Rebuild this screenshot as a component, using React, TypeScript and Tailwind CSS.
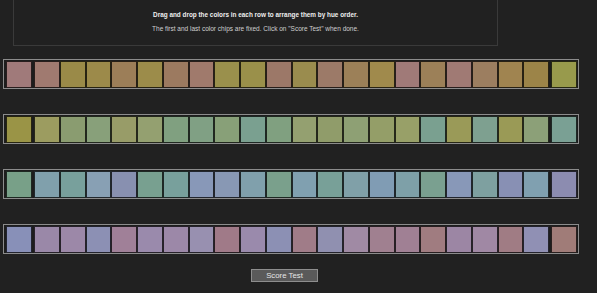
const rows: string[][] = [
  ['#a07a7a', '#a07a70', '#9a8a48', '#9c8a4a', '#9c7e58', '#9c8c4a', '#9c7a60', '#a07a6c', '#9a904c', '#9a904a', '#9c7868', '#9a8c4e', '#9c7a68', '#9c8058', '#a08a4c', '#a07a78', '#9c8058', '#a07a74', '#9c7e60', '#a08450', '#9c8448', '#989a4c'],
  ['#9a9446', '#9c9c60', '#8a9c70', '#88a07a', '#989c68', '#94a070', '#80a080', '#80a084', '#88a078', '#7aa090', '#80a080', '#94a070', '#909c6a', '#8ea074', '#949e68', '#98a068', '#7aa090', '#9a9a58', '#7ea090', '#9a9a56', '#8ca078', '#7aa094'],
  ['#78a088', '#80a0ac', '#78a09c', '#88a0b4', '#8890b0', '#78a090', '#78a09c', '#8898b8', '#8898b4', '#80a0ac', '#7aa08c', '#80a0b0', '#78a098', '#80a0a8', '#809cb4', '#7ea0a8', '#7aa090', '#8898b8', '#7ea0a0', '#8890b4', '#80a0b0', '#8c8cb0'],
  ['#8890b8', '#9a88a8', '#9c88a8', '#8c90b4', '#a08098', '#9a8aac', '#9c88a8', '#9890b0', '#a07a88', '#9a8aac', '#8c90b4', '#a07c88', '#9090b0', '#a08aa4', '#a08090', '#a08094', '#a07c80', '#9c86a4', '#a088a4', '#a07c84', '#9090b4', '#a07c78'],
];

function Chip({ color, fixed }: { color: string; fixed?: boolean }) {
  return (
    <div
      className={(fixed ? 'w-[26px] shrink-0' : 'flex-1') + ' h-[27px] border border-black/75'}
      style={{ backgroundColor: color }}
    />
  );
}

function ChipRow({ colors }: { colors: string[] }) {
  const first = colors[0];
  const last = colors[colors.length - 1];
  const middle = colors.slice(1, -1);
  return (
    <div className="ml-[3px] flex h-[30px] w-[576px] items-center border border-[#8c8c8c] bg-[#1d1d1d] pl-[2px] pr-px">
      <Chip color={first} fixed />
      <div className="mx-[2px] flex w-[515px]">
        {middle.map((c, i) => (
          <Chip key={i} color={c} />
        ))}
      </div>
      <Chip color={last} fixed />
    </div>
  );
}

export default function App() {
  return (
    <div className="min-h-screen w-[597px] bg-[#212121] font-['Liberation_Sans',Arial,sans-serif]">
      <div className="ml-[13px] flex h-[46px] w-[485px] flex-col items-center border border-t-0 border-[#3a3a3a] pt-[11px]">
        <p className="text-[6.4px] font-bold leading-[8px] text-[#eeeeee]">
          Drag and drop the colors in each row to arrange them by hue order.
        </p>
        <p className="mt-[6px] text-[6.5px] leading-[8px] text-[#d0d0d0]">
          The first and last color chips are fixed. Click on "Score Test" when done.
        </p>
      </div>

      <div className="mt-[13px] flex flex-col gap-[25px]">
        {rows.map((r, i) => (
          <ChipRow key={i} colors={r} />
        ))}
      </div>

      <button className="ml-[251px] mt-[15px] flex h-[13px] w-[67px] items-center justify-center border border-[#8e8e8e] bg-[#5a5a5a] text-[7.8px] leading-none text-[#e6e6e6]">
        Score Test
      </button>
    </div>
  );
}
